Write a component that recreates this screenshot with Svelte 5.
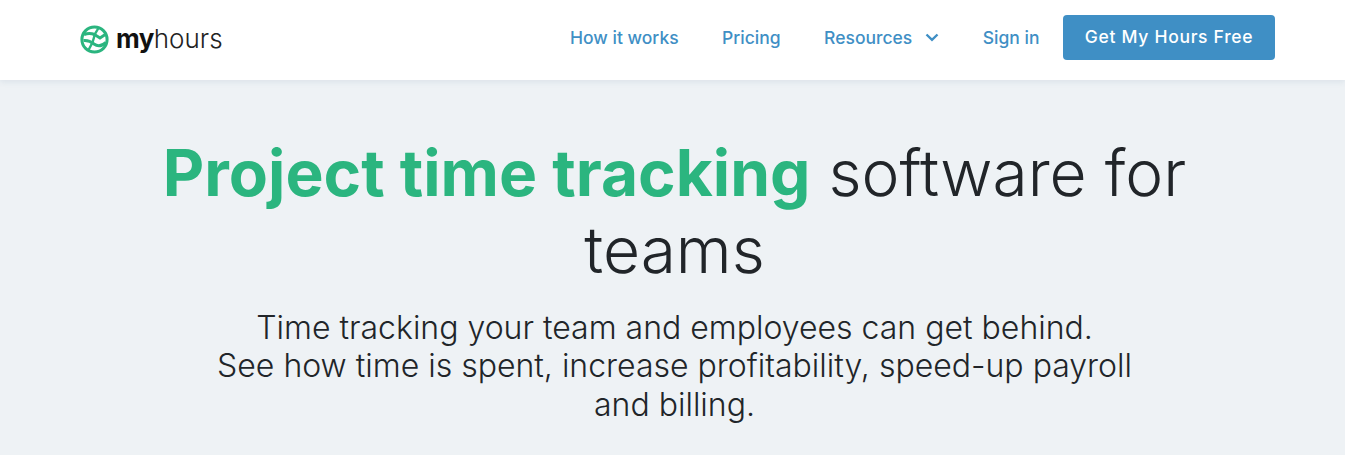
<script>
  const links = ['How it works', 'Pricing']
</script>

<header class="navbar">
  <div class="nav-row">
    <a class="brand" href="#top">
      <svg class="logo" width="29" height="29" viewBox="0 0 29 29" fill="none" stroke="#2bb57f">
        <circle cx="14.5" cy="14.5" r="12.6" stroke-width="3" />
        <path d="M4 9.5 C8 8 11 8 14.5 9.5 L20 13 L26 9" stroke-width="3" />
        <path d="M3.5 15.5 C8 15 11 16.5 14 19 C18 22 22 21 26 17.5" stroke-width="3" />
        <path d="M18.5 3 L15 9 L12.5 17.5 L8.5 25" stroke-width="2.4" />
      </svg>
      <span class="word"><b>my</b>hours</span>
    </a>
    <nav class="links">
      {#each links as link}
        <a href="#top">{link}</a>
      {/each}
      <a class="drop" href="#top">
        Resources
        <svg width="14" height="9" viewBox="0 0 14 9" fill="none" stroke="#3f8fc5" stroke-width="2.4">
          <path d="M1.5 1.5 L7 6.8 L12.5 1.5" />
        </svg>
      </a>
      <a class="signin" href="#top">Sign in</a>
      <a class="cta" href="#top">Get My Hours Free</a>
    </nav>
  </div>
</header>

<main class="hero">
  <h1><strong>Project time tracking</strong> software for teams</h1>
  <p>Time tracking your team and employees can get behind.<br />See how time is spent, increase profitability, speed-up payroll and billing.</p>
</main>

<style>
  :global(body) {
    margin: 0;
    background: #eef2f5;
    font-family: Inter, "Liberation Sans", sans-serif;
    overflow: hidden;
  }

  a {
    text-decoration: none;
  }

  .navbar {
    height: 80px;
    background: #fff;
    box-shadow: 0 2px 6px rgba(60, 100, 140, 0.1);
    position: relative;
  }

  .nav-row {
    display: flex;
    align-items: center;
    justify-content: space-between;
    height: 80px;
    padding: 0 70px 0 80px;
  }

  .brand {
    display: flex;
    align-items: center;
    gap: 7px;
    color: #111;
    padding-bottom: 3px;
  }

  .logo {
    margin-top: 1px;
  }

  .word {
    font-family: Inter, sans-serif;
    font-size: 26px;
    font-weight: 300;
    letter-spacing: 0;
    color: #222;
  }

  .word b {
    font-weight: 700;
    color: #111;
    letter-spacing: -0.6px;
  }

  .links {
    display: flex;
    align-items: center;
    font-size: 17.5px;
    font-weight: 500;
    padding-bottom: 5px;
  }

  .links a {
    color: #3f8fc5;
    margin-right: 43.5px;
  }

  .links .drop {
    display: flex;
    align-items: center;
    gap: 13px;
  }

  .links .signin {
    margin-right: 23.5px;
  }

  .links .cta {
    margin-right: 0;
    background: #3f8fc5;
    color: #fff;
    border-radius: 4px;
    padding: 0 21.75px;
    height: 45px;
    line-height: 43px;
    font-weight: 500;
    letter-spacing: 0.7px;
  }

  .hero {
    width: 1060px;
    margin: 0 auto;
    padding: 54px 0 0 4px;
    text-align: center;
    color: #212529;
  }

  h1 {
    margin: 0;
    font-size: 64px;
    font-weight: 300;
    line-height: 77px;
  }

  h1 strong {
    font-weight: 700;
    color: #2bb57f;
  }

  p {
    width: 930px;
    margin: 21px auto 0;
    font-size: 32px;
    font-weight: 300;
    line-height: 38.4px;
  }
</style>
